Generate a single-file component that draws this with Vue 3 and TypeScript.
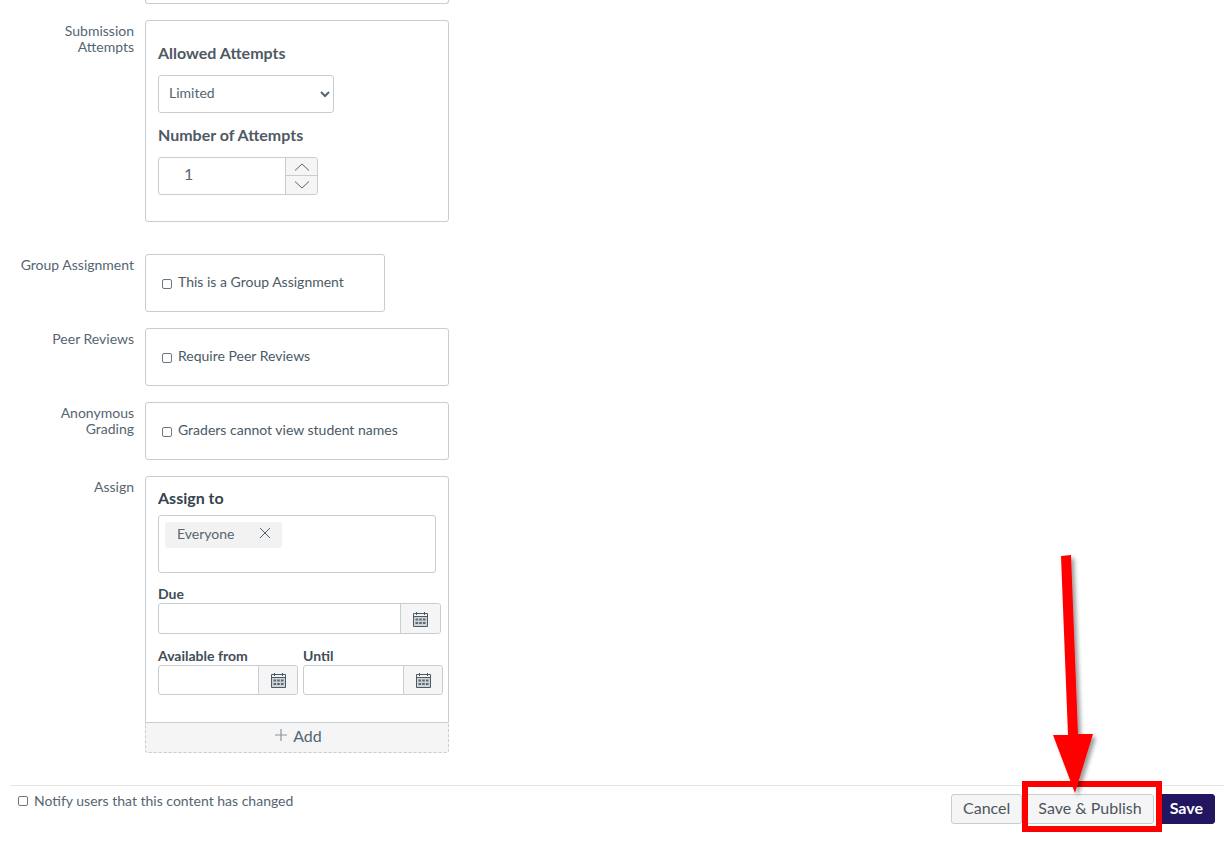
<script setup lang="ts">
const checks = [
  { label: ['Group Assignment'], text: 'This is a Group Assignment', narrow: true },
  { label: ['Peer Reviews'], text: 'Require Peer Reviews', narrow: false },
  { label: ['Anonymous', 'Grading'], text: 'Graders cannot view student names', narrow: false },
]
</script>

<template>
  <div class="page">
    <div class="form">
      <div class="stub"></div>

      <div class="row attempts-row">
        <div class="label">Submission<br />Attempts</div>
        <div class="box attempts">
          <h4 class="field-title">Allowed Attempts</h4>
          <select class="select"><option>Limited</option></select>
          <h4 class="field-title second">Number of Attempts</h4>
          <div class="number">
            <span class="number-value">1</span>
            <div class="spin">
              <span class="spin-btn up">
                <svg width="16" height="10" viewBox="0 0 16 10"><path d="M1 8.500 8 2l7 6.500" /></svg>
              </span>
              <span class="spin-btn down">
                <svg width="16" height="10" viewBox="0 0 16 10"><path d="M1 1.500 8 8l7-6.500" /></svg>
              </span>
            </div>
          </div>
        </div>
      </div>

      <div v-for="c in checks" :key="c.text" class="row">
        <div class="label"><template v-for="(l, i) in c.label" :key="l"><br v-if="i" />{{ l }}</template></div>
        <div class="box check-box" :class="{ narrow: c.narrow }">
          <label class="check"><input type="checkbox" class="cb" />{{ c.text }}</label>
        </div>
      </div>

      <div class="row">
        <div class="label">Assign</div>
        <div class="assign">
          <div class="box assign-body">
            <div class="assign-title">Assign to</div>
            <div class="tokens">
              <span class="token">Everyone
                <svg width="12" height="12" viewBox="0 0 12 12"><path d="M1 1l10 10M11 1 1 11" /></svg>
              </span>
            </div>
            <div class="small-label due-label">Due</div>
            <div class="date date-due">
              <span class="date-input"></span>
              <span class="date-btn">
                <svg class="cal" width="15" height="16" viewBox="0 0 15 16"><path class="cal-fill" d="M1 5h13v10H1z" /><path class="cal-line" d="M.5 2.500h14v13H.5zM.5 5.500h14M3.500 1v3M11.500 1v3" /><path class="cal-dots" d="M2.500 7.500h2.600v2H2.500zM6.200 7.500h2.600v2H6.200zM9.900 7.500h2.600v2H9.900zM2.500 11h2.600v2H2.500zM6.200 11h2.600v2H6.200zM9.900 11h2.600v2H9.900z" /></svg>
              </span>
            </div>
            <div class="range">
              <div class="range-col from">
                <div class="small-label">Available from</div>
                <div class="date date-range">
                  <span class="date-input"></span>
                  <span class="date-btn">
                    <svg class="cal" width="15" height="16" viewBox="0 0 15 16"><path class="cal-fill" d="M1 5h13v10H1z" /><path class="cal-line" d="M.5 2.500h14v13H.5zM.5 5.500h14M3.500 1v3M11.500 1v3" /><path class="cal-dots" d="M2.500 7.500h2.600v2H2.500zM6.200 7.500h2.600v2H6.200zM9.900 7.500h2.600v2H9.900zM2.500 11h2.600v2H2.500zM6.200 11h2.600v2H6.200zM9.900 11h2.600v2H9.900z" /></svg>
                  </span>
                </div>
              </div>
              <div class="range-col until">
                <div class="small-label">Until</div>
                <div class="date date-range">
                  <span class="date-input"></span>
                  <span class="date-btn">
                    <svg class="cal" width="15" height="16" viewBox="0 0 15 16"><path class="cal-fill" d="M1 5h13v10H1z" /><path class="cal-line" d="M.5 2.500h14v13H.5zM.5 5.500h14M3.500 1v3M11.500 1v3" /><path class="cal-dots" d="M2.500 7.500h2.600v2H2.500zM6.200 7.500h2.600v2H6.200zM9.900 7.500h2.600v2H9.900zM2.500 11h2.600v2H2.500zM6.200 11h2.600v2H6.200zM9.900 11h2.600v2H9.900z" /></svg>
                  </span>
                </div>
              </div>
            </div>
          </div>
          <div class="add">
            <svg width="14" height="14" viewBox="0 0 14 14"><path d="M7 1v12M1 7h12" /></svg>
            <span>Add</span>
          </div>
        </div>
      </div>
    </div>

    <div class="footer">
      <label class="notify"><input type="checkbox" class="cb" />Notify users that this content has changed</label>
      <div class="buttons">
        <button class="btn">Cancel</button>
        <button class="btn">Save &amp; Publish</button>
        <button class="btn primary">Save</button>
      </div>
    </div>

    <div class="highlight"></div>
    <svg class="arrow" width="60" height="250" viewBox="0 0 60 250">
      <defs>
        <filter id="arrow-shadow" x="-30%" y="-10%" width="170%" height="130%">
          <feDropShadow dx="3" dy="3" stdDeviation="2" flood-color="#000" flood-opacity="0.4" />
        </filter>
      </defs>
      <path d="M11 6 21 5 28 184 43 184 25 243 3 185 18 185z" fill="#ff0000" filter="url(#arrow-shadow)" />
    </svg>
  </div>
</template>

<style scoped>
.page {
  position: relative;
  height: 857px;
  overflow: hidden;
  background: #fff;
  font-family: Lato, "Noto Sans", sans-serif;
  color: #2d3b45;
}
.form {
  display: flex;
  flex-direction: column;
  gap: 16px;
  padding-left: 145px;
}
.stub {
  width: 304px;
  height: 4px;
  box-sizing: border-box;
  border: 1px solid #c7cdd1;
  border-top: 0;
  border-radius: 0 0 3px 3px;
}
.row {
  display: flex;
  margin-left: -145px;
}
.attempts-row {
  margin-bottom: 16px;
}
.label {
  width: 134px;
  margin-right: 11px;
  flex: none;
  text-align: right;
  font-size: 14px;
  line-height: 16px;
  padding-top: 3px;
  color: #556572;
}
.box {
  box-sizing: border-box;
  width: 304px;
  border: 1px solid #c7cdd1;
  border-radius: 3px;
  background: #fff;
}
.attempts {
  height: 202px;
  padding: 22px 12px 0;
}
.field-title {
  margin: 0 0 12px;
  font-size: 16px;
  line-height: 20px;
  font-weight: 700;
  color: #4f5964;
}
.field-title.second {
  margin: 12px 0 12px;
}
.select {
  display: block;
  box-sizing: border-box;
  width: 176px;
  height: 38px;
  padding: 0 6px 4px;
  border: 1px solid #c7cdd1;
  border-radius: 3px;
  background: #fff;
  font: 14px Lato, sans-serif;
  color: #556572;
}
.number {
  display: flex;
  box-sizing: border-box;
  width: 160px;
  height: 38px;
  border: 1px solid #c7cdd1;
  border-radius: 3px;
  overflow: hidden;
}
.number-value {
  flex: 1;
  padding-left: 25px;
  font-size: 16px;
  line-height: 32px;
  color: #556572;
}
.spin {
  width: 32px;
  flex: none;
  box-sizing: border-box;
  display: flex;
  flex-direction: column;
  border-left: 1px solid #c7cdd1;
}
.spin-btn {
  display: flex;
  align-items: center;
  justify-content: center;
  background: #f5f5f5;
}
.spin-btn.up {
  height: 17px;
}
.spin-btn.down {
  flex: 1;
  border-top: 1px solid #c7cdd1;
}
.spin-btn svg path {
  fill: none;
  stroke: #556572;
  stroke-width: 1;
}
.check-box {
  height: 58px;
  padding: 18px 16px 0;
}
.check-box.narrow {
  width: 240px;
}
.check {
  display: flex;
  align-items: center;
  font-size: 14px;
  line-height: 18px;
  color: #4b5a66;
}
.cb {
  appearance: none;
  flex: none;
  box-sizing: border-box;
  width: 10px;
  height: 10px;
  margin: 3px 6px 0 0;
  border: 1px solid #6b7780;
  border-radius: 2px;
  background: #fff;
}
.assign {
  width: 304px;
}
.assign-body {
  height: 247px;
  padding: 11px 12px 0;
  border-bottom: 1px solid #c7cdd1;
  border-radius: 3px 3px 0 0;
}
.assign-title {
  font-size: 16px;
  line-height: 20px;
  font-weight: 700;
  color: #37434d;
}
.tokens {
  box-sizing: border-box;
  width: 278px;
  height: 58px;
  margin-top: 7px;
  padding: 6px;
  border: 1px solid #c7cdd1;
  border-radius: 3px;
}
.token {
  display: inline-flex;
  align-items: center;
  justify-content: space-between;
  box-sizing: border-box;
  width: 117px;
  height: 26px;
  padding: 0 11px 4px 12px;
  border-radius: 3px;
  background: #f2f2f2;
  font-size: 14px;
  color: #556572;
}
.token svg path {
  fill: none;
  stroke: #556572;
  stroke-width: 1;
}
.small-label {
  font-size: 14px;
  line-height: 16px;
  font-weight: 700;
  color: #414d57;
}
.due-label {
  margin-top: 13px;
}
.date {
  display: flex;
  box-sizing: border-box;
  height: 31px;
  border: 1px solid #c7cdd1;
  border-radius: 3px;
  overflow: hidden;
}
.date-due {
  width: 283px;
  margin-top: 1px;
}
.date-range {
  height: 30px;
}
.date-range .date-btn {
  width: 38px;
}
.date-input {
  flex: 1;
}
.date-btn {
  width: 39px;
  flex: none;
  display: flex;
  align-items: center;
  justify-content: center;
  background: #f5f5f5;
  border-left: 1px solid #c7cdd1;
}
.cal-fill {
  fill: #d0d4d7;
}
.cal-line {
  fill: none;
  stroke: #4b5a66;
  stroke-width: 1;
}
.cal-dots {
  fill: #5d6a74;
}
.range {
  display: flex;
  margin-top: 14px;
}
.range-col .date {
  margin-top: 1px;
}
.from {
  flex: none;
  width: 140px;
  margin-right: 5px;
}
.until {
  flex: none;
  width: 140px;
}
.add {
  box-sizing: border-box;
  height: 30px;
  padding: 0 0 5px 2px;
  display: flex;
  align-items: center;
  justify-content: center;
  gap: 5px;
  border: 1px dashed #c7cdd1;
  border-top: 0;
  border-radius: 0 0 3px 3px;
  background: #f5f5f5;
  font-size: 16px;
  color: #556572;
}
.add svg path {
  fill: none;
  stroke: #8b969e;
  stroke-width: 1.2;
}
.footer {
  position: absolute;
  left: 10px;
  right: 0;
  top: 785px;
  height: 50px;
  box-sizing: border-box;
  border-top: 1px solid #e3e5e7;
  display: flex;
  justify-content: space-between;
  padding: 6px 9px 0 8px;
}
.notify {
  display: flex;
  align-items: center;
  height: 16px;
  font-size: 14px;
  color: #556572;
}
.notify .cb {
  margin: 1px 6px 0 0;
}
.buttons {
  display: flex;
  gap: 4px;
  align-items: flex-start;
  margin-top: 2px;
}
.btn {
  box-sizing: border-box;
  height: 30px;
  padding: 0 11px 3px;
  border: 1px solid #c7cdd1;
  border-radius: 3px;
  background: #f5f5f5;
  font: 16px Lato, sans-serif;
  color: #4b5560;
}
.btn.primary {
  border-color: #221660;
  background: #221660;
  color: #fff;
  font-weight: 700;
}
.highlight {
  position: absolute;
  left: 1022px;
  top: 781px;
  width: 140px;
  height: 51px;
  box-sizing: border-box;
  border: 6px solid #ff0000;
}
.arrow {
  position: absolute;
  left: 1050px;
  top: 550px;
}
</style>

<style>
html, body { margin: 0; background: #fff; }
</style>
